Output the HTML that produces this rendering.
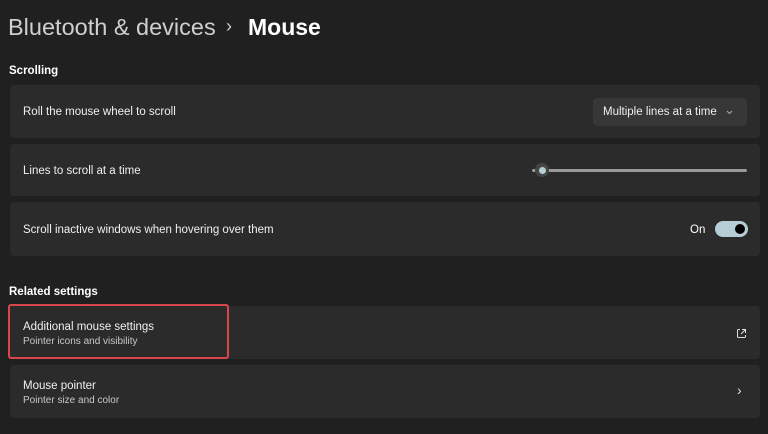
<!DOCTYPE html><html><head><style>
body{margin:0;width:768px;height:434px;background:#202020;font-family:"Liberation Sans",sans-serif;color:#fff;position:relative;overflow:hidden}
.a{position:absolute}
.card{position:absolute;left:10px;width:750px;background:#2b2b2b;border-radius:4px}
.t{position:absolute;left:13px;font-size:11.5px;color:#f0f0f0}
.s{position:absolute;left:13px;font-size:10px;color:#c8c8c8}
</style></head><body>
<div class="a" style="left:8px;top:14px;font-size:23.5px;color:#cfcfcf">Bluetooth &amp; devices</div>
<div class="a" style="left:226px;top:16px;font-size:18px;color:#cfcfcf">›</div>
<div class="a" style="left:248px;top:14px;font-size:23px;font-weight:bold;color:#fff">Mouse</div>
<div class="a" style="left:9px;top:65px;font-size:11.5px;font-weight:bold">Scrolling</div>
<div class="card" style="top:85px;height:53px"><div class="t" style="top:21px">Roll the mouse wheel to scroll</div>
<div class="a" style="left:583px;top:13px;width:154px;height:28px;background:#373737;border-radius:4px"><span class="a" style="left:10px;top:8px;font-size:11.5px;color:#eee">Multiple lines at a time</span><svg class="a" style="left:133px;top:12px" width="7" height="5" viewBox="0 0 7 5" fill="none" stroke="#aaa"><path d="M1 1l2.5 2.5L6 1"/></svg></div></div>
<div class="card" style="top:144px;height:52px"><div class="t" style="top:21px">Lines to scroll at a time</div>
<div class="a" style="left:522px;top:25px;width:215px;height:3px;background:#9a9a9a;border-radius:2px"></div>
<div class="a" style="left:525px;top:19px;width:14px;height:14px;background:#454545;border-radius:50%"></div>
<div class="a" style="left:529px;top:23px;width:7px;height:7px;background:#b9cfd6;border-radius:50%"></div></div>
<div class="card" style="top:202px;height:54px"><div class="t" style="top:22px">Scroll inactive windows when hovering over them</div>
<div class="a" style="left:680px;top:22px;font-size:11.5px">On</div>
<div class="a" style="left:705px;top:19px;width:33px;height:16px;background:#b5cdd5;border-radius:8px"><div class="a" style="left:20px;top:3px;width:10px;height:10px;background:#000;border-radius:50%"></div></div></div>
<div class="a" style="left:9px;top:286px;font-size:11.5px;font-weight:bold">Related settings</div>
<div class="card" style="top:306px;height:53px"><div class="t" style="top:15px">Additional mouse settings</div><div class="s" style="top:30px">Pointer icons and visibility</div>
<svg class="a" style="left:726px;top:22px" width="11" height="11" viewBox="0 0 11 11" fill="none" stroke="#ddd" stroke-width="1"><path d="M4 1.5H2.5a1 1 0 0 0-1 1v6a1 1 0 0 0 1 1h6a1 1 0 0 0 1-1V7M6 1.5h3.5V5M9.5 1.5L5 6"/></svg></div>
<div class="a" style="left:8px;top:304px;width:217px;height:51px;border:2px solid #d8474c;border-radius:3px;z-index:5"></div>
<div class="card" style="top:365px;height:53px"><div class="t" style="top:15px">Mouse pointer</div><div class="s" style="top:30px">Pointer size and color</div>
<div class="a" style="left:727px;top:17px;font-size:14px;color:#ddd">›</div></div>
</body></html>
